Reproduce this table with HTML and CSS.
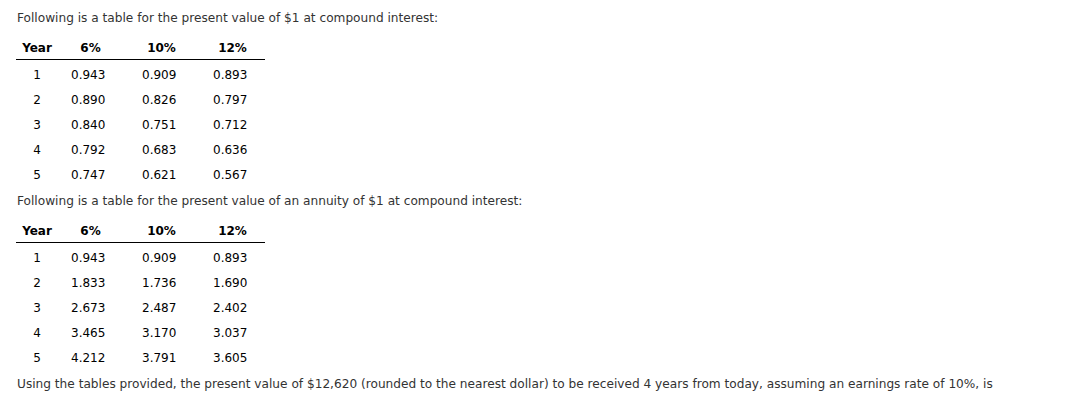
FILE: index.html
```html
<!DOCTYPE html>
<html>
<head>
<meta charset="utf-8">
<link rel="stylesheet" href="styles.css">
</head>
<body>
<div class="page">
  <p class="para">Following is a table for the present value of $1 at compound interest:</p>
  <div class="tbl">
    <div class="th yr">Year</div><div class="th">6%</div><div class="th">10%</div><div class="th last">12%</div>
    <div class="td yr">1</div><div class="td">0.943</div><div class="td">0.909</div><div class="td">0.893</div>
    <div class="td yr">2</div><div class="td">0.890</div><div class="td">0.826</div><div class="td">0.797</div>
    <div class="td yr">3</div><div class="td">0.840</div><div class="td">0.751</div><div class="td">0.712</div>
    <div class="td yr">4</div><div class="td">0.792</div><div class="td">0.683</div><div class="td">0.636</div>
    <div class="td yr">5</div><div class="td">0.747</div><div class="td">0.621</div><div class="td">0.567</div>
  </div>
  <p class="para">Following is a table for the present value of an annuity of $1 at compound interest:</p>
  <div class="tbl">
    <div class="th yr">Year</div><div class="th">6%</div><div class="th">10%</div><div class="th last">12%</div>
    <div class="td yr">1</div><div class="td">0.943</div><div class="td">0.909</div><div class="td">0.893</div>
    <div class="td yr">2</div><div class="td">1.833</div><div class="td">1.736</div><div class="td">1.690</div>
    <div class="td yr">3</div><div class="td">2.673</div><div class="td">2.487</div><div class="td">2.402</div>
    <div class="td yr">4</div><div class="td">3.465</div><div class="td">3.170</div><div class="td">3.037</div>
    <div class="td yr">5</div><div class="td">4.212</div><div class="td">3.791</div><div class="td">3.605</div>
  </div>
  <p class="para">Using the tables provided, the present value of $12,620 (rounded to the nearest dollar) to be received 4 years from today, assuming an earnings rate of 10%, is</p>
</div>
</body>
</html>
```

FILE: styles.css
```css
html, body {
  margin: 0;
  padding: 0;
  background: #ffffff;
}
.page {
  padding-top: 8px;
  font-family: "DejaVu Sans", Verdana, sans-serif;
}
.para {
  margin: 0 0 11px 17px;
  font-size: 12.15px;
  line-height: 20px;
  color: #333333;
}
.tbl {
  display: grid;
  grid-template-columns: 42px 71px 71px 65px;
  width: 249px;
  margin: 0 0 3px 16px;
  font-size: 12px;
  color: #000000;
}
.th {
  font-weight: bold;
  line-height: 18px;
  padding-bottom: 2px;
  text-align: center;
  padding-right: 6px;
  border-bottom: 1px solid #000000;
  margin-bottom: 3px;
}
.th.yr {
  padding-right: 0;
}
.th.last {
  padding-right: 0;
}
.td {
  line-height: 25px;
  text-align: left;
  padding-left: 13px;
}
.td.yr {
  text-align: center;
  padding-left: 0;
}
```
